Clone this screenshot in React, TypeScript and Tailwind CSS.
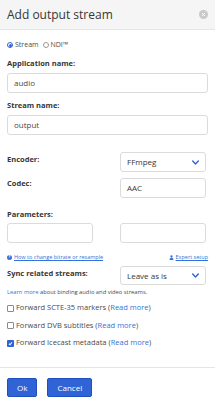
import React from 'react';

const FONT = "font-['Open_Sans','Noto_Sans',sans-serif]";

function Chevron() {
  return (
    <svg width="7" height="5" viewBox="0 0 10 6" fill="none" stroke="#2f63d6" strokeWidth="2" strokeLinecap="round" strokeLinejoin="round">
      <path d="M1 1l4 4 4-4" />
    </svg>
  );
}

function Check({ checked, label }: { checked?: boolean; label: string }) {
  return (
    <div className="flex items-center h-[10px] text-[7.5px] text-[#4a4a4a]">
      {checked ? (
        <span className="w-[7px] h-[7px] rounded-[1px] bg-[#2f63d6] flex items-center justify-center mr-[2px]">
          <svg width="5" height="5" viewBox="0 0 10 10" fill="none" stroke="white" strokeWidth="2.2">
            <path d="M2 5.5l2 2 4-5" />
          </svg>
        </span>
      ) : (
        <span className="w-[7px] h-[7px] rounded-[1px] border border-[#8a8a8a] bg-white mr-[2px]" />
      )}
      <span>
        {label} (<span className="text-[#3273dc]">Read more</span>)
      </span>
    </div>
  );
}

export default function App() {
  return (
    <div className={`w-[215px] h-[400px] bg-white overflow-hidden ${FONT}`}>
      {/* HEADER */}
      <div className="h-[30px] bg-[#f5f5f5] border-b border-[#e6e6e6] flex items-center justify-between px-[7px]">
        <span className="text-[12px] text-[#363636] leading-none">Add output stream</span>
        <span className="w-[9px] h-[9px] rounded-full bg-[#c9c9c9] flex items-center justify-center">
          <svg width="5" height="5" viewBox="0 0 10 10" stroke="white" strokeWidth="2">
            <path d="M2 2l6 6M8 2l-6 6" />
          </svg>
        </span>
      </div>

      <div className="px-[7px]">
        {/* RADIO */}
        <div className="mt-[10px] h-[10px] flex items-center text-[7px] text-[#4a4a4a]">
          <span className="w-[6px] h-[6px] rounded-full border border-[#2f63d6] flex items-center justify-center mr-[2px]">
            <span className="w-[3px] h-[3px] rounded-full bg-[#2f63d6]" />
          </span>
          <span className="mr-[4px]">Stream</span>
          <span className="w-[6px] h-[6px] rounded-full border border-[#9a9a9a] mr-[2px]" />
          <span>NDI™</span>
        </div>

        <div className="mt-[8px] h-[10px] text-[7.5px] font-bold text-[#363636] leading-[10px]">Application name:</div>
        <div className="mt-[5px] h-[20px] border border-[#dbdbdb] rounded-[3px] flex items-center px-[6px] text-[8px] text-[#4a4a4a]">audio</div>

        <div className="mt-[7px] h-[10px] text-[7.5px] font-bold text-[#363636] leading-[10px]">Stream name:</div>
        <div className="mt-[5px] h-[20px] border border-[#dbdbdb] rounded-[3px] flex items-center px-[6px] text-[8px] text-[#4a4a4a]">output</div>

        {/* ENCODER / CODEC */}
        <div className="mt-[17px] grid grid-cols-[86px_86px] gap-x-[27px] gap-y-[6px]">
          <div className="pt-[2px] text-[7.5px] font-bold text-[#363636] leading-[10px]">Encoder:</div>
          <div className="h-[20px] border border-[#dbdbdb] rounded-[3px] flex items-center justify-between px-[6px] text-[8px] text-[#363636]">
            <span>FFmpeg</span>
            <Chevron />
          </div>
          <div className="text-[7.5px] font-bold text-[#363636] leading-[10px]">Codec:</div>
          <div className="h-[20px] border border-[#dbdbdb] rounded-[3px] flex items-center px-[6px] text-[8px] text-[#363636]">AAC</div>
        </div>

        {/* PARAMETERS */}
        <div className="mt-[11px] h-[10px] text-[7.5px] font-bold text-[#363636] leading-[10px]">Parameters:</div>
        <div className="mt-[4px] grid grid-cols-[86px_86px] gap-x-[27px]">
          <div className="h-[20px] border border-[#dbdbdb] rounded-[3px]" />
          <div className="h-[20px] border border-[#dbdbdb] rounded-[3px]" />
        </div>

        <div className="mt-[10px] h-[8px] flex items-center justify-between text-[5.5px] text-[#3273dc]">
          <span className="flex items-center">
            <span className="w-[5px] h-[5px] rounded-full bg-[#3273dc] text-white text-[4px] leading-none flex items-center justify-center font-bold mr-[2px]">?</span>
            <span className="underline">How to change bitrate or resample</span>
          </span>
          <span className="flex items-center">
            <svg width="5" height="5" viewBox="0 0 10 10" fill="#3273dc" className="mr-[2px]">
              <circle cx="5" cy="3" r="2.3" />
              <path d="M1 10c0-3 1.8-4.3 4-4.3S9 7 9 10z" />
            </svg>
            <span className="underline">Expert setup</span>
          </span>
        </div>

        {/* SYNC */}
        <div className="mt-[5px] grid grid-cols-[86px_86px] gap-x-[27px]">
          <div className="pt-[2px] text-[7.5px] font-bold text-[#363636] leading-[10px] whitespace-nowrap">Sync related streams:</div>
          <div className="h-[19px] border border-[#dbdbdb] rounded-[3px] flex items-center justify-between px-[6px] text-[8px] text-[#363636]">
            <span>Leave as is</span>
            <Chevron />
          </div>
        </div>
        <div className="mt-[4px] h-[6px] text-[5.8px] leading-[6px] text-[#4a4a4a] whitespace-nowrap">
          <span className="text-[#3273dc]">Learn more</span> about binding audio and video streams.
        </div>

        {/* CHECKBOXES */}
        <div className="mt-[8px] flex flex-col gap-[7.5px]">
          <Check label="Forward SCTE-35 markers" />
          <Check label="Forward DVB subtitles" />
          <Check checked label="Forward Icecast metadata" />
        </div>
      </div>

      {/* FOOTER */}
      <div className="mt-[19px] border-t border-[#e6e6e6] px-[7px] pt-[10px] flex gap-[10px]">
        <button className="h-[19px] px-[9px] rounded-[2px] bg-[#2f63d6] border border-[#1f4fbf] text-white text-[8px]">Ok</button>
        <button className="h-[19px] px-[9px] rounded-[2px] bg-[#2f63d6] border border-[#1f4fbf] text-white text-[8px]">Cancel</button>
      </div>
    </div>
  );
}
